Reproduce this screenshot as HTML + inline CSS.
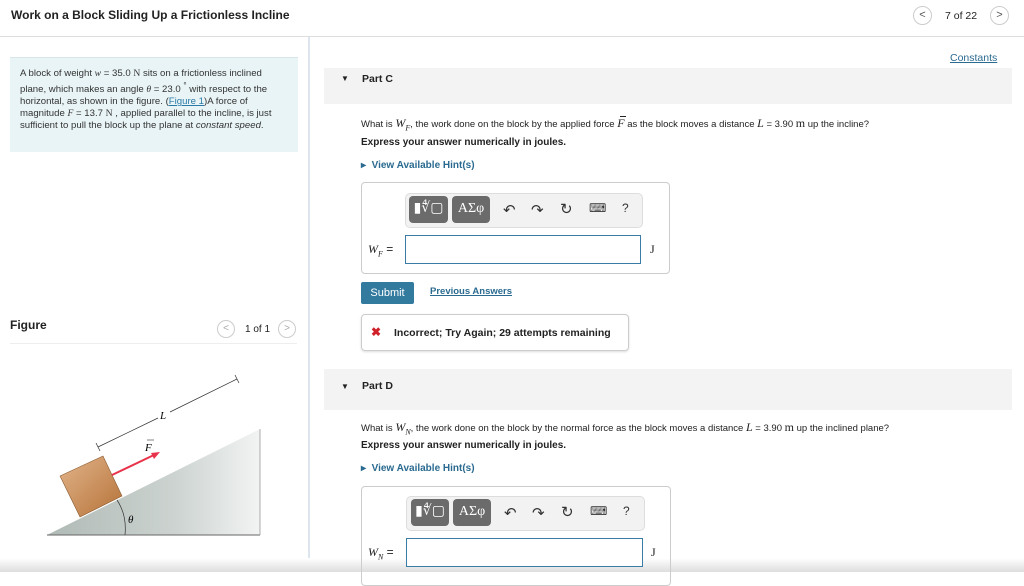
<!DOCTYPE html>
<html><head><meta charset="utf-8"><style>
*{margin:0;padding:0;box-sizing:border-box}
body{width:1024px;height:572px;overflow:hidden;background:#fff;font-family:"Liberation Sans",Arial,sans-serif;color:#222;position:relative}
.a{position:absolute}
.m{font-family:"Liberation Serif",serif;font-style:italic}
.r{font-family:"Liberation Serif",serif}
.circ{width:19px;height:19px;border:1px solid #ccc;border-radius:50%;text-align:center;font-size:11px;line-height:16px;color:#555}
.bar{background:#f3f3f3;left:324px;width:688px}
.tb{background:#f2f2f2;border:1px solid #ddd;border-radius:5px;height:35px}
.btn{background:#6b6b6b;border-radius:4px;color:#fff;height:27px;top:3px;font-family:"Liberation Serif",serif;font-size:14px;text-align:center;line-height:26px}
.ic{font-size:15px;color:#333;top:8px}
.box{border:1px solid #ccc;border-radius:4px}
.inp{border:1px solid #3a7ca5;background:#fff}
.vec{position:relative;display:inline-block}
.vec:before{content:"";position:absolute;left:3px;top:0;width:6px;height:1px;background:#222}
</style></head><body>
<div class="a" style="left:11px;top:8px;font-size:12px;font-weight:bold">Work on a Block Sliding Up a Frictionless Incline</div>
<div class="a circ" style="left:913px;top:6px">&lt;</div>
<div class="a" style="left:945px;top:10px;font-size:10.5px">7 of 22</div>
<div class="a circ" style="left:990px;top:6px">&gt;</div>
<div class="a" style="left:0;top:36px;width:1024px;height:1px;background:#ddd"></div>
<div class="a" style="left:308px;top:37px;width:2px;height:535px;background:#dde5ee"></div>

<div class="a" style="left:10px;top:57px;width:288px;height:95px;background:#e9f4f6;border-top:1px solid #d8e6ea"></div>
<div class="a" style="left:20px;top:68px;width:268px;font-size:9.6px;line-height:12px;color:#333">A block of weight <span class="m">w</span> = 35.0 <span class="r">N</span> sits on a frictionless inclined plane, which makes an angle <span class="m">θ</span> = 23.0 <sup>°</sup> with respect to the horizontal, as shown in the figure. (<span style="color:#2a7aa8;text-decoration:underline">Figure 1</span>)A force of magnitude <span class="m">F</span> = 13.7 <span class="r">N</span> , applied parallel to the incline, is just sufficient to pull the block up the plane at <i>constant speed</i>.</div>

<div class="a" style="left:10px;top:318px;font-size:12px;font-weight:bold">Figure</div>
<div class="a circ" style="left:217px;top:320px;width:18px;height:18px;line-height:15px;font-size:10px;color:#aaa">&lt;</div>
<div class="a" style="left:245px;top:324px;font-size:10px">1 of 1</div>
<div class="a circ" style="left:278px;top:320px;width:18px;height:18px;line-height:15px;font-size:10px;color:#aaa">&gt;</div>
<div class="a" style="left:10px;top:343px;width:287px;height:1px;background:#eee"></div>

<svg class="a" style="left:0;top:360px" width="300" height="212">
<defs><linearGradient id="g" x1="0" y1="0" x2="1" y2="0"><stop offset="0" stop-color="#b0bab5"/><stop offset="0.6" stop-color="#ccd3d0"/><stop offset="1" stop-color="#f2f4f3"/></linearGradient>
<linearGradient id="b" x1="0" y1="0" x2="1" y2="1"><stop offset="0" stop-color="#e2b48a"/><stop offset="1" stop-color="#b57238"/></linearGradient></defs>
<polygon points="47,175 260,69 260,175" fill="url(#g)"/>
<line x1="47" y1="175" x2="260" y2="175" stroke="#666" stroke-width="1"/>
<line x1="260" y1="69" x2="260" y2="175" stroke="#999" stroke-width="0.8"/>
<polygon points="60,116 103,96 122,136 80,157" fill="url(#b)" stroke="#8a5a30" stroke-width="0.6"/>
<line x1="112" y1="115" x2="156" y2="94" stroke="#e8334a" stroke-width="2"/>
<polygon points="160,92 151,93 154,99" fill="#e8334a"/>
<line x1="98" y1="87" x2="158" y2="58" stroke="#333" stroke-width="0.7"/>
<line x1="170" y1="52" x2="237" y2="19" stroke="#333" stroke-width="0.7"/>
<line x1="96" y1="83" x2="100" y2="91" stroke="#333" stroke-width="0.7"/>
<line x1="235" y1="15" x2="239" y2="23" stroke="#333" stroke-width="0.7"/>
<text x="160" y="59" font-family="Liberation Serif" font-style="italic" font-size="11">L</text>
<text x="145" y="91" font-family="Liberation Serif" font-style="italic" font-size="11">F</text>
<line x1="147" y1="80" x2="154" y2="80" stroke="#333" stroke-width="0.6"/>
<path d="M117,140 Q127,155 125,175" fill="none" stroke="#333" stroke-width="0.7"/>
<text x="128" y="163" font-family="Liberation Serif" font-style="italic" font-size="11">θ</text>
</svg>
<div class="a" style="left:0;top:558px;width:1024px;height:14px;background:linear-gradient(#fff,#ddd)"></div>

<div class="a" style="left:950px;top:52px;font-size:10.5px;color:#2a6a90;text-decoration:underline">Constants</div>

<div class="a bar" style="top:68px;height:36px"></div>
<div class="a" style="left:341px;top:74px;font-size:8px">▼</div>
<div class="a" style="left:362px;top:73px;font-size:10.5px;font-weight:bold">Part C</div>
<div class="a" style="left:361px;top:116px;font-size:9.5px">What is <span class="m" style="font-size:12px">W<sub style="font-size:8px">F</sub></span>, the work done on the block by the applied force <span class="m vec" style="font-size:12px">F</span> as the block moves a distance <span class="m" style="font-size:12px">L</span> = 3.90 <span class="r" style="font-size:12px">m</span> up the incline?</div>
<div class="a" style="left:361px;top:137px;font-size:10px;font-weight:bold">Express your answer numerically in joules.</div>
<div class="a" style="left:361px;top:160px;font-size:10px;font-weight:bold;color:#2a6a90">▸&nbsp; View Available Hint(s)</div>

<div class="a box" style="left:361px;top:182px;width:309px;height:92px"></div>
<div class="a tb" style="left:405px;top:193px;width:238px"></div>
<div class="a btn" style="left:409px;top:196px;width:39px">▮∜▢</div>
<div class="a btn" style="left:452px;top:196px;width:38px">ΑΣφ</div>
<div class="a ic" style="left:503px;top:201px">↶</div><div class="a ic" style="left:531px;top:201px">↷</div><div class="a ic" style="left:560px;top:200px">↻</div><div class="a ic" style="left:589px;top:201px;font-size:12px">⌨</div><div class="a ic" style="left:622px;top:201px;font-size:12px">?</div>
<div class="a" style="left:368px;top:242px;font-size:12px"><span class="m">W<sub style="font-size:8px">F</sub></span> =</div>
<div class="a inp" style="left:405px;top:235px;width:236px;height:29px"></div>
<div class="a r" style="left:650px;top:242px;font-size:12px">J</div>

<div class="a" style="left:361px;top:282px;width:53px;height:22px;background:#337a9f;border-radius:2px;color:#fff;font-size:11px;text-align:center;line-height:22px">Submit</div>
<div class="a" style="left:430px;top:286px;font-size:9.5px;font-weight:bold;color:#2a6a90;text-decoration:underline">Previous Answers</div>
<div class="a box" style="left:361px;top:314px;width:268px;height:37px;box-shadow:0 1px 2px #ddd"></div>
<div class="a" style="left:371px;top:325px;font-size:12px;color:#d0202a;font-weight:bold">✖</div>
<div class="a" style="left:394px;top:327px;font-size:10.5px;font-weight:bold">Incorrect; Try Again; 29 attempts remaining</div>

<div class="a bar" style="top:369px;height:41px"></div>
<div class="a" style="left:341px;top:382px;font-size:8px">▼</div>
<div class="a" style="left:362px;top:380px;font-size:10.5px;font-weight:bold">Part D</div>
<div class="a" style="left:361px;top:420px;font-size:9.5px">What is <span class="m" style="font-size:12px">W<sub style="font-size:8px">N</sub></span>, the work done on the block by the normal force as the block moves a distance <span class="m" style="font-size:12px">L</span> = 3.90 <span class="r" style="font-size:12px">m</span> up the inclined plane?</div>
<div class="a" style="left:361px;top:440px;font-size:10px;font-weight:bold">Express your answer numerically in joules.</div>
<div class="a" style="left:361px;top:463px;font-size:10px;font-weight:bold;color:#2a6a90">▸&nbsp; View Available Hint(s)</div>

<div class="a box" style="left:361px;top:486px;width:310px;height:100px"></div>
<div class="a tb" style="left:406px;top:496px;width:239px"></div>
<div class="a btn" style="left:411px;top:499px;width:38px">▮∜▢</div>
<div class="a btn" style="left:453px;top:499px;width:38px">ΑΣφ</div>
<div class="a ic" style="left:504px;top:504px">↶</div><div class="a ic" style="left:532px;top:504px">↷</div><div class="a ic" style="left:561px;top:503px">↻</div><div class="a ic" style="left:590px;top:504px;font-size:12px">⌨</div><div class="a ic" style="left:623px;top:504px;font-size:12px">?</div>
<div class="a" style="left:368px;top:545px;font-size:12px"><span class="m">W<sub style="font-size:8px">N</sub></span> =</div>
<div class="a inp" style="left:406px;top:538px;width:237px;height:29px"></div>
<div class="a r" style="left:651px;top:545px;font-size:12px">J</div>
</body></html>
